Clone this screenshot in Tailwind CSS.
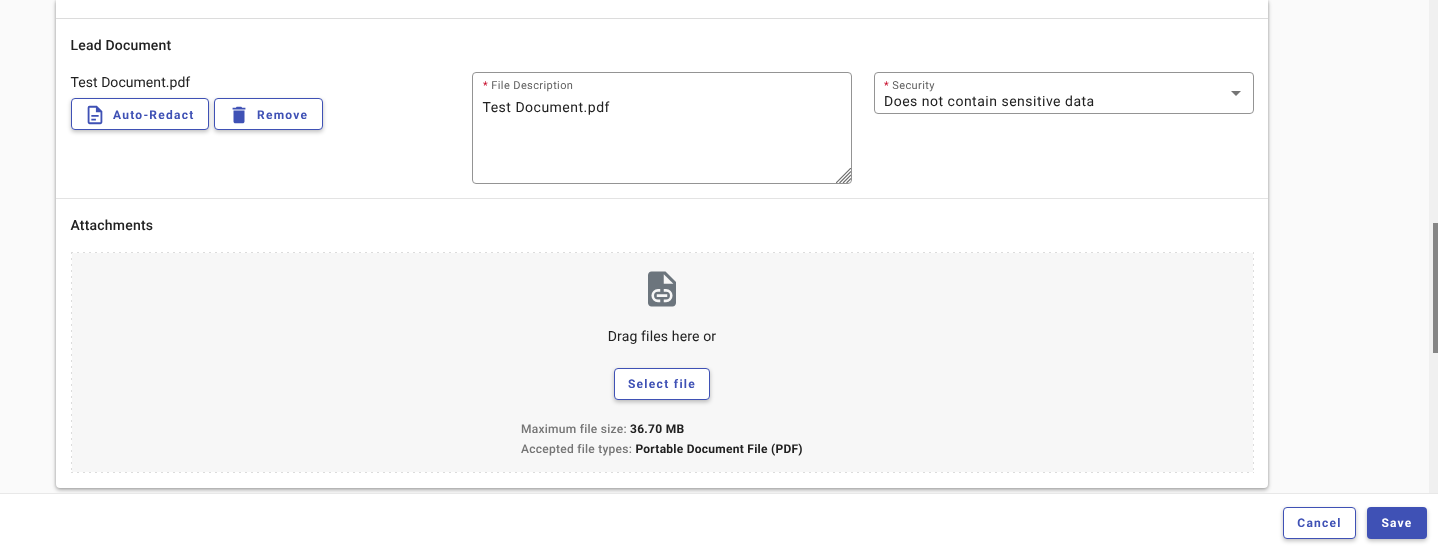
<!doctype html>
<html>
<head>
<meta charset="utf-8">
<script src="https://cdn.jsdelivr.net/npm/@tailwindcss/browser@4"></script>
</head>
<body class="bg-[#fafafa] overflow-hidden font-['Roboto',sans-serif] text-[#212121] [text-rendering:geometricPrecision] [&_*]:[text-rendering:geometricPrecision]">
<div class="flex flex-col h-[551px] w-[1438px] will-change-transform">
  <div class="flex h-[493px] shrink-0">
    <div class="flex-1 pl-[56px] min-w-0">
      <div class="w-[1212px] h-[488px] bg-white rounded-b shadow-[0_2px_4px_rgba(0,0,0,0.3),0_0_3px_rgba(0,0,0,0.2)] flex flex-col">
        <div class="h-[19px] border-b border-[#dcdcdc] shrink-0"></div>
        <section class="h-[180px] shrink-0 border-b border-[#e3e3e3] pl-[15px] pr-[14px] pt-[18px]">
          <h2 class="text-[14px] leading-[18px] font-medium tracking-[0.2px] -ml-[0.5px]">Lead Document</h2>
          <div class="flex mt-[17px]">
            <div class="w-[401px] shrink-0">
              <div class="text-[14px] leading-[20px] tracking-[0.05px] -ml-[0.5px] mt-[1px]">Test Document.pdf</div>
              <div class="flex gap-[5px] mt-[5px]">
                <button class="h-[32px] w-[138px] flex items-center gap-[7px] pl-[12px] pt-[1px] bg-white border border-[#3f51b5] rounded text-[#3f51b5] text-[12px] font-bold tracking-[1.25px] shadow-[0_2px_4px_rgba(0,0,0,0.25)]">
                  <svg class="w-[22px] h-[22px]" viewBox="0 0 24 24" fill="currentColor"><path d="M6,2A2,2 0 0,0 4,4V20A2,2 0 0,0 6,22H18A2,2 0 0,0 20,20V8L14,2H6M6,4H13V9H18V20H6V4M8,12V14H16V12H8M8,16V18H13V16H8Z"/></svg>
                  Auto-Redact
                </button>
                <button class="h-[32px] w-[109px] flex items-center gap-[7px] pl-[13px] pt-[1px] bg-white border border-[#3f51b5] rounded text-[#3f51b5] text-[12px] font-bold tracking-[1.25px] shadow-[0_2px_4px_rgba(0,0,0,0.25)]">
                  <svg class="w-[22px] h-[22px]" viewBox="0 0 24 24" fill="currentColor"><path d="M19 4h-3.5l-1-1h-5l-1 1H5v2h14V4zM6 19c0 1.1.9 2 2 2h8c1.1 0 2-.9 2-2V7H6v12z"/></svg>
                  Remove
                </button>
              </div>
            </div>
            <div class="relative w-[380px] h-[112px] shrink-0">
              <label class="absolute left-[11px] top-[7px] text-[11px] leading-[13px] tracking-[0.4px] text-[#616161]"><span class="text-[#c8102e]">*</span> File Description</label>
              <textarea class="block w-full h-[112px] border border-[#949494] rounded pt-[25px] pl-[9.5px] pr-[10px] text-[14px] leading-[20px] tracking-[0.5px] text-[#212121] resize-none outline-none bg-white">Test Document.pdf</textarea>
              <svg class="absolute right-[1px] bottom-[1px] w-[15px] h-[15px]" viewBox="0 0 15 15" fill="none" stroke="#6e6e6e" stroke-width="1.2"><path d="M0 15L15 0M3.5 15L15 3.5M7 15L15 7M10.5 15L15 10.5"/></svg>
            </div>
            <div class="w-[380px] h-[42px] shrink-0 ml-[22px] border border-[#949494] rounded px-[9px] pt-[6px] flex justify-between">
              <div>
                <div class="text-[11px] leading-[13px] tracking-[0.4px] text-[#616161]"><span class="text-[#c8102e]">*</span> Security</div>
                <div class="text-[14px] leading-[16px] tracking-[0.5px] mt-[2px]">Does not contain sensitive data</div>
              </div>
              <svg class="w-[10px] h-[5px] mt-[12px] mr-[3px]" viewBox="0 0 10 5" fill="#757575"><path d="M0 0h10L5 5z"/></svg>
            </div>
          </div>
        </section>
        <section class="flex-1 pl-[15px] pr-[14px] pt-[18px] pb-[15px] flex flex-col">
          <h2 class="text-[14px] leading-[18px] font-medium tracking-[0.2px] -ml-[0.5px]">Attachments</h2>
          <div class="mt-[17px] flex-1 flex flex-col items-center pr-[1px] [background:repeating-linear-gradient(90deg,#dcdcdc_0_2px,#fff_2px_6px)_0_0/100%_1px_no-repeat,repeating-linear-gradient(90deg,#dcdcdc_0_2px,#fff_2px_6px)_0_100%/100%_1px_no-repeat,repeating-linear-gradient(180deg,#dcdcdc_0_2px,#fff_2px_6px)_0_0/1px_100%_no-repeat,repeating-linear-gradient(180deg,#dcdcdc_0_2px,#fff_2px_6px)_100%_0/1px_100%_no-repeat,#f7f7f7]">
            <svg class="w-[42px] h-[42px] mt-[16px]" viewBox="0 0 24 24">
              <path fill="#6c757d" d="M6 2H14L20 8V20C20 21.1 19.1 22 18 22H6C4.9 22 4 21.1 4 20V4C4 2.9 4.9 2 6 2Z"/>
              <path fill="#f7f7f7" d="M13 3.5L18.5 9H13Z"/>
              <path fill="none" stroke="#f7f7f7" stroke-width="1.5" d="M11 12.75H9.7a3 3 0 0 0 0 6H11M13 12.75H14.3a3 3 0 0 1 0 6H13M9 15.75H15"/>
            </svg>
            <p class="text-[14px] leading-[20px] tracking-[0.15px] mt-[17px]">Drag files here or</p>
            <button class="h-[32px] w-[96px] mt-[21px] bg-white border border-[#3f51b5] rounded text-[#3f51b5] text-[12px] font-bold tracking-[1.3px] shadow-[0_2px_4px_rgba(0,0,0,0.25)]">Select file</button>
            <div class="self-start ml-[450px] mt-[19px] text-[12px] leading-[20px] font-medium text-[#757575] tracking-[0.26px]">
              <div>Maximum file size: <b class="font-bold text-[#212121]">36.70 MB</b></div>
              <div>Accepted file types: <b class="font-bold text-[#212121]">Portable Document File (PDF)</b></div>
            </div>
          </div>
        </section>
      </div>
    </div>
    <div class="w-[9px] shrink-0 bg-[#f0f0f0] pl-[4px]">
      <div class="w-[5px] h-[130px] mt-[223px] bg-[#858585]"></div>
    </div>
  </div>
  <footer class="flex-1 bg-white border-t border-[#e8e8e8] flex justify-end items-start gap-[11px] pt-[13px] pr-[11px]">
    <button class="h-[32px] w-[73px] bg-white border border-[#3f51b5] rounded text-[#3f51b5] text-[12px] font-bold tracking-[1.25px] shadow-[0_2px_4px_rgba(0,0,0,0.25)]">Cancel</button>
    <button class="h-[32px] w-[60px] bg-[#3f51b5] rounded text-white text-[12px] font-bold tracking-[1.25px] shadow-[0_2px_4px_rgba(0,0,0,0.25)]">Save</button>
  </footer>
</div>
</body>
</html>
